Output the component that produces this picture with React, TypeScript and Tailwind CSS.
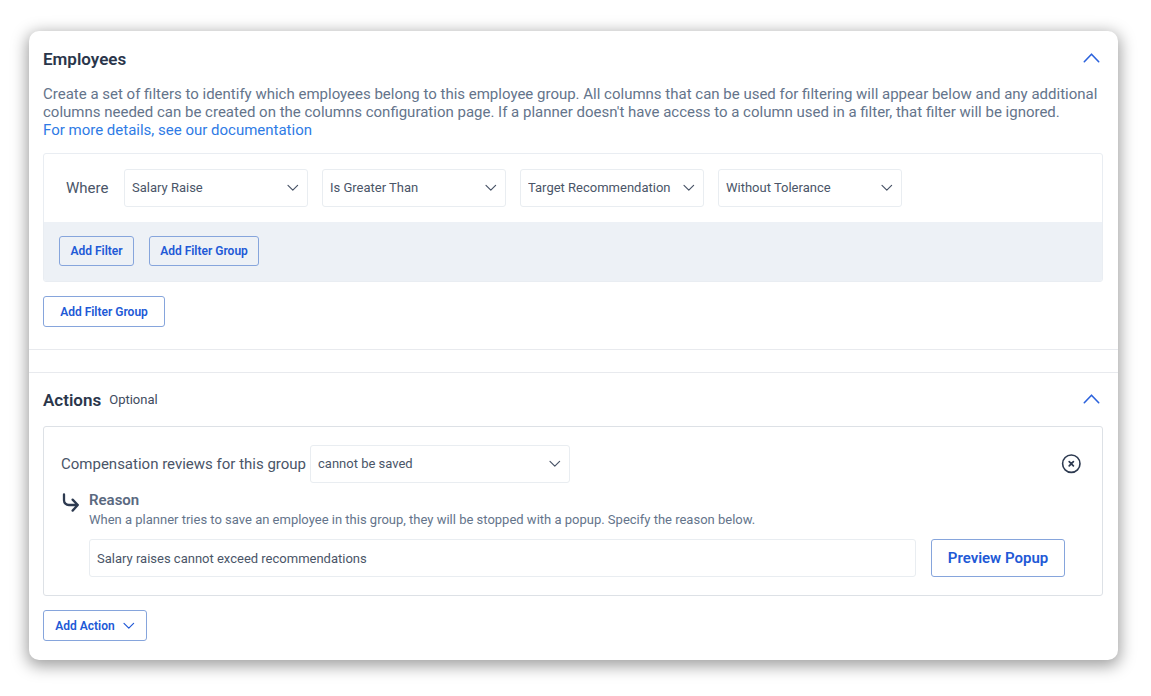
import React, { useId, useState } from "react";

type ChevronProps = { className?: string };

function ChevronDown({ className = "" }: ChevronProps) {
  return (
    <svg viewBox="0 0 12 8" fill="none" stroke="currentColor" strokeWidth="1.2" strokeLinecap="round" strokeLinejoin="round" aria-hidden="true" className={`h-2 w-3 ${className}`}>
      <path d="M1 1.4 5.8 6.2l4.8-4.8" />
    </svg>
  );
}

function ChevronUp() {
  return (
    <svg viewBox="0 0 18 12" fill="none" stroke="currentColor" strokeWidth="1.6" strokeLinecap="round" strokeLinejoin="round" aria-hidden="true" className="h-3 w-[18px]">
      <path d="M2.3 8.7 9.5 1.2l7.2 7.5" />
    </svg>
  );
}

function TurnArrow() {
  return (
    <svg viewBox="0 0 18 20" fill="none" stroke="currentColor" strokeWidth="2.3" strokeLinecap="round" strokeLinejoin="round" aria-hidden="true" className="h-5 w-[18px]">
      <path d="M3 1.5v5.7a4.8 4.8 0 0 0 4.8 4.8H16.4M11.6 6.6 16.8 12l-5.2 5.6" />
    </svg>
  );
}

function RemoveIcon() {
  return (
    <svg viewBox="0 0 20 20" fill="none" stroke="currentColor" strokeLinecap="round" aria-hidden="true" className="size-5">
      <circle cx="10.3" cy="9.7" r="8.7" strokeWidth="1.6" />
      <path d="m8.2 7.6 4.2 4.2m0-4.2-4.2 4.2" strokeWidth="1.7" />
    </svg>
  );
}

type SelectProps = { label: string; id?: string; options: string[]; width: string };

function Select({ label, id, options, width }: SelectProps) {
  return (
    <div className={`relative flex items-center text-[#4a5568] ${width}`}>
      <select id={id} aria-label={id ? undefined : label} className="h-[38px] w-full appearance-none rounded-[3px] border border-[#e9edf1] bg-white pr-7 pl-[7px] text-[13px]">
        {options.map((option) => (
          <option key={option}>{option}</option>
        ))}
      </select>
      <ChevronDown className="pointer-events-none absolute right-[9px]" />
    </div>
  );
}

type ButtonProps = { children: React.ReactNode; size: string };

function OutlineButton({ children, size }: ButtonProps) {
  return (
    <button type="button" className={`flex shrink-0 items-center justify-center rounded-[3px] border border-[#86a5dc] font-semibold whitespace-nowrap text-[#2159d6] ${size}`}>
      {children}
    </button>
  );
}

type SectionProps = { title: string; note?: string; className: string; children: React.ReactNode };

function Section({ title, note, className, children }: SectionProps) {
  const [open, setOpen] = useState(true);
  return (
    <section className={`pr-[15px] pl-[14px] ${className}`}>
      <div className="flex h-6 items-center justify-between">
        <div className="flex items-center gap-2">
          <h2 className="text-[17px] leading-6 font-semibold text-[#2a364b]">{title}</h2>
          {note && <span className="text-[13px] leading-6 text-[#3f4b5e]">{note}</span>}
        </div>
        <button type="button" aria-expanded={open} aria-label={`Toggle ${title}`} onClick={() => setOpen(!open)} className="px-[3px] text-[#2b62dc]">
          <ChevronUp />
        </button>
      </div>
      {open && children}
    </section>
  );
}

export default function App() {
  const outcomeId = useId();
  const reasonId = useId();
  return (
    <main className="min-h-screen bg-white pt-[31px] pr-[33px] pb-9 pl-[29px] font-['Roboto','Liberation_Sans',sans-serif]">
      <div className="rounded-[10px] bg-white shadow-[0_4px_16px_2px_rgba(0,0,0,0.38)]">
        <Section title="Employees" className="border-b border-[#e8eaee] pt-4 pb-[22px]">
          <p className="mt-[14px] text-[15px] leading-[18px] text-[#64748b]">
            Create a set of filters to identify which employees belong to this employee group. All columns that can be used for filtering will appear below and any additional columns needed can be created on the columns configuration page. If a planner doesn't have access to a column used in a filter, that filter will be ignored.{" "}
            <a href="#documentation" className="block text-[#2f7be5]">For more details, see our documentation</a>
          </p>
          <div className="mt-[14px] overflow-hidden rounded-[3px] border border-[#e9edf2]">
            <div className="flex items-center gap-[14px] py-[15px] pr-4 pl-[22px]">
              <span className="w-11 text-[15px] whitespace-nowrap text-[#4a5568]">Where</span>
              <Select label="Column" options={["Salary Raise"]} width="w-[184px]" />
              <Select label="Comparison" options={["Is Greater Than"]} width="w-[184px]" />
              <Select label="Value" options={["Target Recommendation"]} width="w-[184px]" />
              <Select label="Tolerance" options={["Without Tolerance"]} width="w-[184px]" />
            </div>
            <div className="flex gap-[15px] bg-[#edf1f6] px-[15px] pt-[14px] pb-[15px]">
              <OutlineButton size="h-[30px] w-[75px] text-[12px]">Add Filter</OutlineButton>
              <OutlineButton size="h-[30px] w-[110px] text-[12px]">Add Filter Group</OutlineButton>
            </div>
          </div>
          <div className="mt-[14px] flex">
            <OutlineButton size="h-[31px] w-[122px] text-[12px]">Add Filter Group</OutlineButton>
          </div>
        </Section>

        <Section title="Actions" note="Optional" className="mt-[22px] border-t border-[#e8eaee] pt-[15px] pb-[19px]">
          <div className="mt-[14px] rounded-[3px] border border-[#dde1e6] py-[18px] pr-[21px] pl-[17px]">
            <div className="flex items-center gap-1">
              <label htmlFor={outcomeId} className="text-[15px] whitespace-nowrap text-[#4a5568]">Compensation reviews for this group</label>
              <Select id={outcomeId} label="Outcome" options={["cannot be saved"]} width="w-[260px]" />
              <button type="button" aria-label="Remove action" className="ml-auto text-[#2d3a50]">
                <RemoveIcon />
              </button>
            </div>
            <div className="mt-[7px] flex pr-4">
              <div className="w-7 shrink-0 pt-[3px] text-[#2d3a50]">
                <TurnArrow />
              </div>
              <div className="min-w-0 flex-1">
                <label htmlFor={reasonId} className="block text-[15px] leading-5 font-semibold text-[#5a6980]">Reason</label>
                <p className="text-[13px] leading-5 text-[#64748b]">When a planner tries to save an employee in this group, they will be stopped with a popup. Specify the reason below.</p>
                <div className="mt-[9px] flex gap-[15px]">
                  <input id={reasonId} type="text" defaultValue="Salary raises cannot exceed recommendations" className="h-[38px] min-w-0 flex-1 rounded-[3px] border border-[#e9edf1] bg-white px-[7px] text-[13px] text-[#4a5568]" />
                  <OutlineButton size="h-[38px] w-[134px] text-[15px]">Preview Popup</OutlineButton>
                </div>
              </div>
            </div>
          </div>
          <div className="mt-[14px] flex">
            <OutlineButton size="h-[31px] w-[104px] gap-2 text-[12px]">
              Add Action
              <ChevronDown />
            </OutlineButton>
          </div>
        </Section>
      </div>
    </main>
  );
}
